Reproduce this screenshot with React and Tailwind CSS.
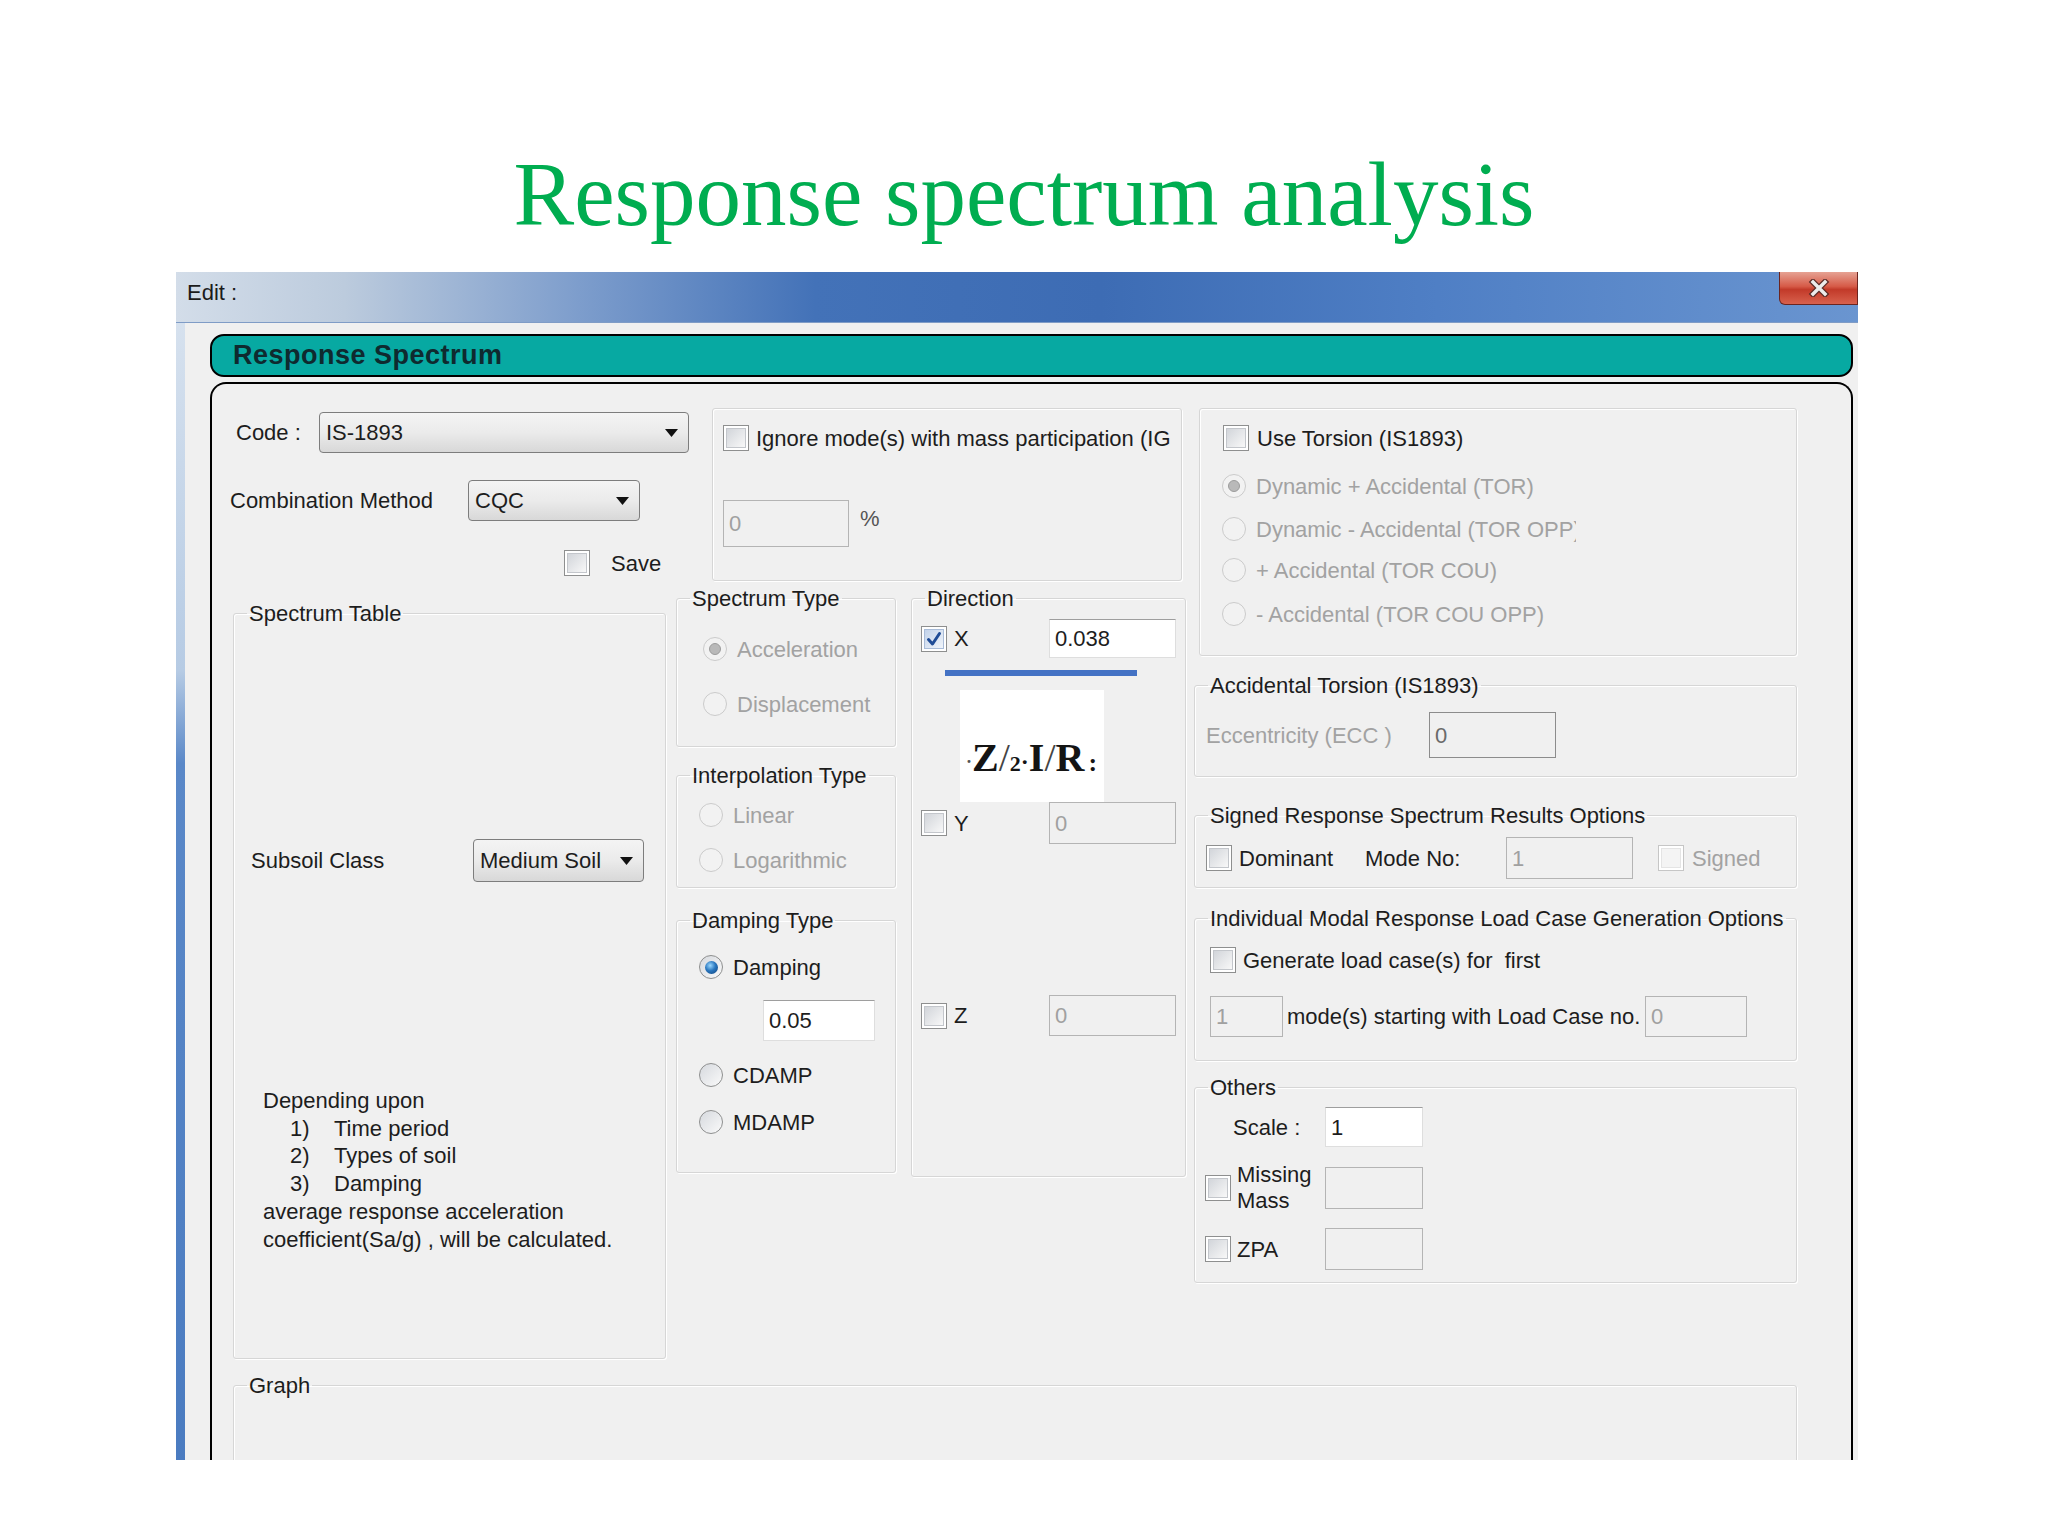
import React from "react";

// Windows Vista style dialog controls
const Check = ({ checked, disabled }) => (
    <div className={`w-[26px] h-[26px] shrink-0 border bg-white p-[2px] ${disabled ? "border-[#c6c6c6]" : "border-[#8e8f8f]"}`}>
        <div className={`h-full w-full border flex items-center justify-center ${disabled ? "border-[#e4e4e4] bg-[#f4f4f4]" : checked ? "border-[#a9bcd8] bg-gradient-to-br from-[#c3d3ea] to-[#f0f4fa]" : "border-[#c3c6cb] bg-gradient-to-br from-[#d2d5da] to-[#f8f8f8]"}`}>
            {checked && (
                <svg width="16" height="16" viewBox="0 0 16 16">
                    <path d="M2.5 8.5 L6.5 13 L13.5 2.5" fill="none" stroke="#1f4c96" strokeWidth="3" strokeLinecap="round" strokeLinejoin="round" />
                </svg>
            )}
        </div>
    </div>
);

const Radio = ({ checked, disabled }) => (
    <div className={`w-[24px] h-[24px] shrink-0 rounded-full border flex items-center justify-center ${disabled ? "border-[#cbcbcb] bg-[#f2f2f2]" : "border-[#8e8f8f] bg-gradient-to-br from-[#d6d9de] to-[#fafafa]"}`}>
        {checked && disabled && <div className="w-[12px] h-[12px] rounded-full border border-[#9c9c9c] bg-[#b9b9b9]" />}
        {checked && !disabled && <div className="w-[13px] h-[13px] rounded-full bg-[radial-gradient(circle_at_40%_35%,#9ad8ff_0%,#2a77bf_45%,#0d3f78_100%)]" />}
    </div>
);

const Select = ({ value, className }) => (
    <div className={`flex items-center justify-between shrink-0 rounded-[4px] border border-[#7d7d7d] bg-gradient-to-b from-[#f4f4f4] via-[#ebebeb] to-[#d8d8d8] pl-[6px] pr-[10px] ${className}`}>
        <span>{value}</span>
        <svg width="13" height="8" viewBox="0 0 13 8">
            <path d="M0 0 H13 L6.5 8 Z" fill="#111" />
        </svg>
    </div>
);

const Field = ({ value, kind, className }) => {
    const look = {
        white: "bg-white border-[#dedede] border-t-[#9e9e9e] text-[#1d1d1d]",
        off: "bg-[#f0f0f0] border-[#b4b4b4] text-[#a0a0a0]",
        dark: "bg-[#f0f0f0] border-[#8c8c8c] text-[#6a6a6a]",
    }[kind];
    return (
        <div className={`flex items-center shrink-0 border pl-[5px] ${look} ${className}`}>{value}</div>
    );
};

const Group = ({ title, className, children }) => (
    <fieldset className={`min-w-0 shrink-0 rounded-[3px] border border-[#d6d6d6] shadow-[inset_1px_1px_0_#ffffff,1px_1px_0_#ffffff] ${className}`}>
        {title && <legend className="whitespace-nowrap leading-[25px] px-[2px] ml-[13px]">{title}</legend>}
        {children}
    </fieldset>
);

const Box = ({ className, children }) => (
    <div className={`shrink-0 rounded-[3px] border border-[#d6d6d6] shadow-[inset_1px_1px_0_#ffffff,1px_1px_0_#ffffff] ${className}`}>
        {children}
    </div>
);

const Off = ({ children, className = "" }) => (
    <span className={`text-[#a2a2a2] ${className}`}>{children}</span>
);

function RadioRow({ label, checked, disabled, className = "" }) {
    return (
        <div className={`flex items-center h-[30px] ${className}`}>
            <Radio checked={checked} disabled={disabled} />
            <span className={`ml-[10px] whitespace-nowrap ${disabled ? "text-[#a2a2a2]" : ""}`}>{label}</span>
        </div>
    );
}

export default function App() {
    return (
        <div className="w-[2048px] h-[1536px] overflow-hidden bg-white font-['Liberation_Sans',Arial,sans-serif] text-[22px] leading-[25px] text-[#1d1d1d]">
            <div className="pt-[149px] text-center font-['Liberation_Serif','Times_New_Roman',serif] text-[91px] leading-none text-[#00ad50]">
                Response spectrum analysis
            </div>

            <div className="mt-[32px] ml-[176px] w-[1682px] h-[1188px] overflow-hidden flex flex-col">
                {/* caption */}
                <div className="h-[51px] shrink-0 flex justify-between bg-[linear-gradient(90deg,#d3dde9_0%,#bccbdd_10%,#7d9dcc_24%,#4372b8_38%,#3d6cb4_55%,#4f7fc5_75%,#6a95d0_100%)] border-b border-[#7f9cc6]">
                    <div className="pl-[11px] pt-[8px] text-[#1b1b1b]">Edit :</div>
                    <div className="w-[79px] h-[33px] flex items-center justify-center rounded-bl-[6px] border border-t-0 border-[#6b2520] bg-[linear-gradient(180deg,#e6a293_0%,#d65a47_45%,#c23a29_55%,#d8614d_100%)]">
                        <svg width="22" height="18" viewBox="0 0 22 18">
                            <path d="M5 3 L17 15 M17 3 L5 15" stroke="#5a2a26" strokeWidth="6" strokeLinecap="square" />
                            <path d="M5 3 L17 15 M17 3 L5 15" stroke="#ececec" strokeWidth="3.5" strokeLinecap="square" />
                        </svg>
                    </div>
                </div>

                <div className="flex-1 flex bg-[#f0f0f0]">
                    <div className="w-[9px] shrink-0 bg-[linear-gradient(180deg,#d6e1ee_0%,#b6cbe4_30%,#5a88c8_38%,#4a7bc0_100%)]" />
                    <div className="pl-[25px] pt-[11px]">
                        <div className="w-[1643px] h-[43px] flex items-center rounded-[14px] border-2 border-black bg-[#07a9a2] pl-[21px] text-[27px] font-bold tracking-[0.5px] text-[#0f2a2f]">
                            Response Spectrum
                        </div>

                        <div className="mt-[5px] w-[1643px] h-[1100px] rounded-t-[16px] border-2 border-b-0 border-black">
                            <div className="flex items-start">
                                {/* left column */}
                                <div className="ml-[18px] w-[446px] shrink-0 pt-[28px]">
                                    <div className="flex items-center h-[41px]">
                                        <div className="w-[89px] shrink-0 pl-[6px]">Code :</div>
                                        <Select value="IS-1893" className="w-[370px] h-[41px]" />
                                    </div>
                                    <div className="mt-[27px] flex items-center h-[41px]">
                                        <div className="w-[238px] shrink-0">Combination Method</div>
                                        <Select value="CQC" className="w-[172px] h-[41px]" />
                                    </div>
                                    <div className="mt-[29px] flex items-center h-[26px] pl-[334px]">
                                        <Check />
                                        <span className="ml-[21px]">Save</span>
                                    </div>
                                    <Group title="Spectrum Table" className="mt-[25px] ml-[3px] w-[433px] h-[758px]">
                                        <div className="mt-[213px] flex items-center h-[43px] pl-[17px]">
                                            <div className="w-[222px] shrink-0">Subsoil Class</div>
                                            <Select value="Medium Soil" className="w-[171px] h-[43px]" />
                                        </div>
                                        <div className="mt-[205px] pl-[29px] leading-[27.7px]">
                                            <div>Depending upon</div>
                                            <div className="flex pl-[27px]"><span className="w-[44px]">1)</span>Time period</div>
                                            <div className="flex pl-[27px]"><span className="w-[44px]">2)</span>Types of soil</div>
                                            <div className="flex pl-[27px]"><span className="w-[44px]">3)</span>Damping</div>
                                            <div>average response acceleration</div>
                                            <div>coefficient(Sa/g) , will be calculated.</div>
                                        </div>
                                    </Group>
                                </div>

                                {/* middle column */}
                                <div className="w-[510px] shrink-0 pt-[24px]">
                                    <Box className="ml-[36px] w-[470px] h-[173px] overflow-hidden pt-[16px] pl-[10px]">
                                        <div className="flex items-center h-[26px]">
                                            <Check />
                                            <span className="ml-[7px] whitespace-nowrap">Ignore mode(s) with mass participation (IG</span>
                                        </div>
                                        <div className="mt-[49px] flex items-start">
                                            <Field value="0" kind="off" className="w-[126px] h-[47px]" />
                                            <span className="ml-[11px] mt-[6px] text-[#555]">%</span>
                                        </div>
                                    </Box>

                                    <div className="mt-[4.5px] flex items-start">
                                        <div className="w-[220px] shrink-0">
                                            <Group title="Spectrum Type" className="w-[220px] h-[161.5px]">
                                                <div className="pt-[23.5px] pl-[26px]">
                                                    <RadioRow label="Acceleration" checked disabled />
                                                    <RadioRow label="Displacement" disabled className="mt-[25px]" />
                                                </div>
                                            </Group>
                                            <Group title="Interpolation Type" className="mt-[15.5px] w-[220px] h-[125.5px]">
                                                <div className="pt-[12.5px] pl-[22px]">
                                                    <RadioRow label="Linear" disabled />
                                                    <RadioRow label="Logarithmic" disabled className="mt-[15px]" />
                                                </div>
                                            </Group>
                                            <Group title="Damping Type" className="mt-[19.5px] w-[220px] h-[265.5px]">
                                                <div className="pt-[19.5px] pl-[22px]">
                                                    <RadioRow label="Damping" checked />
                                                    <Field value="0.05" kind="white" className="mt-[18px] ml-[64px] w-[112px] h-[41px]" />
                                                    <RadioRow label="CDAMP" className="mt-[19px]" />
                                                    <RadioRow label="MDAMP" className="mt-[17px]" />
                                                </div>
                                            </Group>
                                        </div>

                                        <Group title="Direction" className="ml-[15px] w-[275px] h-[591.5px]">
                                            <div className="pt-[8.5px] pl-[9px]">
                                                <div className="flex items-center h-[39px]">
                                                    <div className="w-[128px] shrink-0 flex items-center">
                                                        <Check checked />
                                                        <span className="ml-[7px]">X</span>
                                                    </div>
                                                    <Field value="0.038" kind="white" className="w-[127px] h-[39px]" />
                                                </div>
                                                <div className="mt-[12px] ml-[24px] w-[192px] h-[6px] bg-[#4472c4]" />
                                                <div className="mt-[14px] ml-[39px] w-[144px] h-[112px] overflow-hidden bg-white">
                                                    <div className="pt-[48px] pl-[6px] whitespace-nowrap font-['Liberation_Serif','Times_New_Roman',serif] font-bold text-[40px] leading-[40px] text-[#141414]">
                                                        <span className="text-[18px] align-middle text-[#555]">·</span>
                                                        Z<span className="font-normal text-[#444]">/</span><span className="text-[22px]">2</span>
                                                        <span className="text-[24px] align-middle">·</span>I<span className="font-normal text-[#444]">/</span>R
                                                        <span className="text-[26px] ml-[4px]">:</span>
                                                    </div>
                                                </div>
                                                <div className="flex items-center h-[42px]">
                                                    <div className="w-[128px] shrink-0 flex items-center">
                                                        <Check />
                                                        <span className="ml-[7px]">Y</span>
                                                    </div>
                                                    <Field value="0" kind="off" className="w-[127px] h-[42px]" />
                                                </div>
                                                <div className="mt-[151px] flex items-center h-[41px]">
                                                    <div className="w-[128px] shrink-0 flex items-center">
                                                        <Check />
                                                        <span className="ml-[7px]">Z</span>
                                                    </div>
                                                    <Field value="0" kind="off" className="w-[127px] h-[41px]" />
                                                </div>
                                            </div>
                                        </Group>
                                    </div>
                                </div>

                                {/* right column */}
                                <div className="ml-[8px] w-[605px] shrink-0 pt-[24px]">
                                    <Box className="ml-[5px] w-[598px] h-[248px] pt-[16px] pl-[23px]">
                                        <div className="flex items-center h-[26px]">
                                            <Check />
                                            <span className="ml-[8px]">Use Torsion (IS1893)</span>
                                        </div>
                                        <RadioRow label="Dynamic + Accidental (TOR)" checked disabled className="mt-[20px] -ml-[1px]" />
                                        <div className="mt-[13px] -ml-[1px] flex items-center h-[30px]">
                                            <Radio disabled />
                                            <Off className="ml-[10px] w-[320px] overflow-hidden whitespace-nowrap">Dynamic - Accidental (TOR OPP)</Off>
                                        </div>
                                        <RadioRow label="+ Accidental (TOR COU)" disabled className="mt-[11px] -ml-[1px]" />
                                        <RadioRow label="- Accidental (TOR COU OPP)" disabled className="mt-[14px] -ml-[1px]" />
                                    </Box>

                                    <Group title="Accidental Torsion (IS1893)" className="mt-[16.5px] w-[603px] h-[104.5px]">
                                        <div className="pt-[14.5px] pl-[11px] flex items-center h-[60.5px]">
                                            <Off className="w-[223px] shrink-0">Eccentricity (ECC )</Off>
                                            <Field value="0" kind="dark" className="w-[127px] h-[46px]" />
                                        </div>
                                    </Group>

                                    <Group title="Signed Response Spectrum Results Options" className="mt-[25.5px] w-[603px] h-[85.5px]">
                                        <div className="mt-[9.5px] pl-[11px] flex items-center h-[42px]">
                                            <div className="w-[159px] shrink-0 flex items-center">
                                                <Check />
                                                <span className="ml-[7px]">Dominant</span>
                                            </div>
                                            <div className="w-[141px] shrink-0">Mode No:</div>
                                            <Field value="1" kind="off" className="w-[127px] h-[42px]" />
                                            <div className="ml-[25px]"><Check disabled /></div>
                                            <Off className="ml-[8px]">Signed</Off>
                                        </div>
                                    </Group>

                                    <Group title="Individual Modal Response Load Case Generation Options" className="mt-[17.5px] w-[603px] h-[155.5px]">
                                        <div className="pt-[16.5px] pl-[15px]">
                                            <div className="flex items-center h-[26px]">
                                                <Check />
                                                <span className="ml-[7px] whitespace-pre">Generate load case(s) for  first</span>
                                            </div>
                                            <div className="mt-[23px] flex items-center h-[41px]">
                                                <Field value="1" kind="off" className="w-[73px] h-[41px]" />
                                                <span className="ml-[4px] w-[358px] shrink-0 whitespace-nowrap">mode(s) starting with Load Case no.</span>
                                                <Field value="0" kind="off" className="w-[102px] h-[41px]" />
                                            </div>
                                        </div>
                                    </Group>

                                    <Group title="Others" className="mt-[13.5px] w-[603px] h-[208.5px]">
                                        <div className="pt-[7.5px]">
                                            <div className="flex items-center h-[40px] pl-[38px]">
                                                <div className="w-[92px] shrink-0">Scale :</div>
                                                <Field value="1" kind="white" className="w-[98px] h-[40px]" />
                                            </div>
                                            <div className="mt-[20px] flex items-center h-[42px] pl-[10px]">
                                                <div className="w-[120px] shrink-0 flex items-center">
                                                    <Check />
                                                    <div className="ml-[6px] leading-[26px]">Missing<br />Mass</div>
                                                </div>
                                                <Field value="" kind="off" className="w-[98px] h-[42px]" />
                                            </div>
                                            <div className="mt-[19px] flex items-center h-[42px] pl-[10px]">
                                                <div className="w-[120px] shrink-0 flex items-center">
                                                    <Check />
                                                    <span className="ml-[6px]">ZPA</span>
                                                </div>
                                                <Field value="" kind="off" className="w-[98px] h-[42px]" />
                                            </div>
                                        </div>
                                    </Group>
                                </div>
                            </div>

                            <Group title="Graph" className="ml-[21px] mt-[13.5px] w-[1564px] h-[200px]" />
                        </div>
                    </div>
                </div>
            </div>
        </div>
    );
}
